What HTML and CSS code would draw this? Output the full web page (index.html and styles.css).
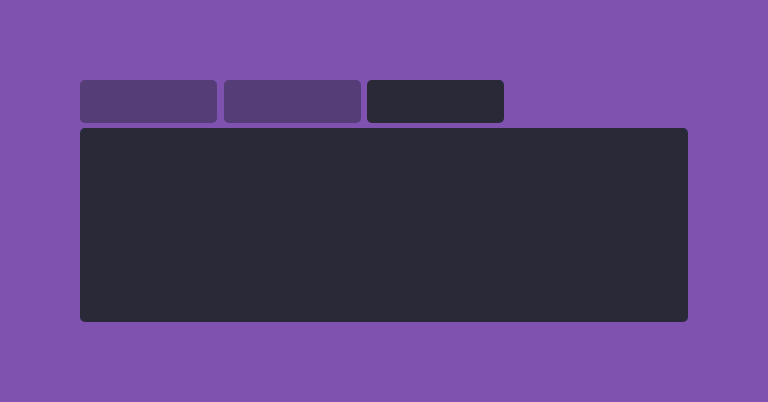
FILE: index.html
```html
<!DOCTYPE html>
<html>
<head>
<meta charset="utf-8">
<link rel="stylesheet" href="styles.css">
</head>
<body>
<div class="wrap">
  <div class="tabs">
    <div class="tab"></div>
    <div class="tab"></div>
    <div class="tab active"></div>
  </div>
  <div class="panel"></div>
</div>
</body>
</html>
```
FILE: styles.css
```css
html, body {
  margin: 0;
  padding: 0;
  background: #7f52b0;
  font-family: "Liberation Sans", sans-serif;
}
body {
  width: 768px;
  height: 402px;
  overflow: hidden;
}
.wrap {
  padding: 80px 0 0 80px;
  width: 608px;
}
.tabs {
  display: flex;
  gap: 6.5px;
}
.tab {
  width: 137px;
  height: 43px;
  border-radius: 5px;
  background: #553d77;
}
.tab.active {
  background: #292937;
}
.panel {
  margin-top: 5px;
  height: 194px;
  border-radius: 5px;
  background: #292937;
}
```
